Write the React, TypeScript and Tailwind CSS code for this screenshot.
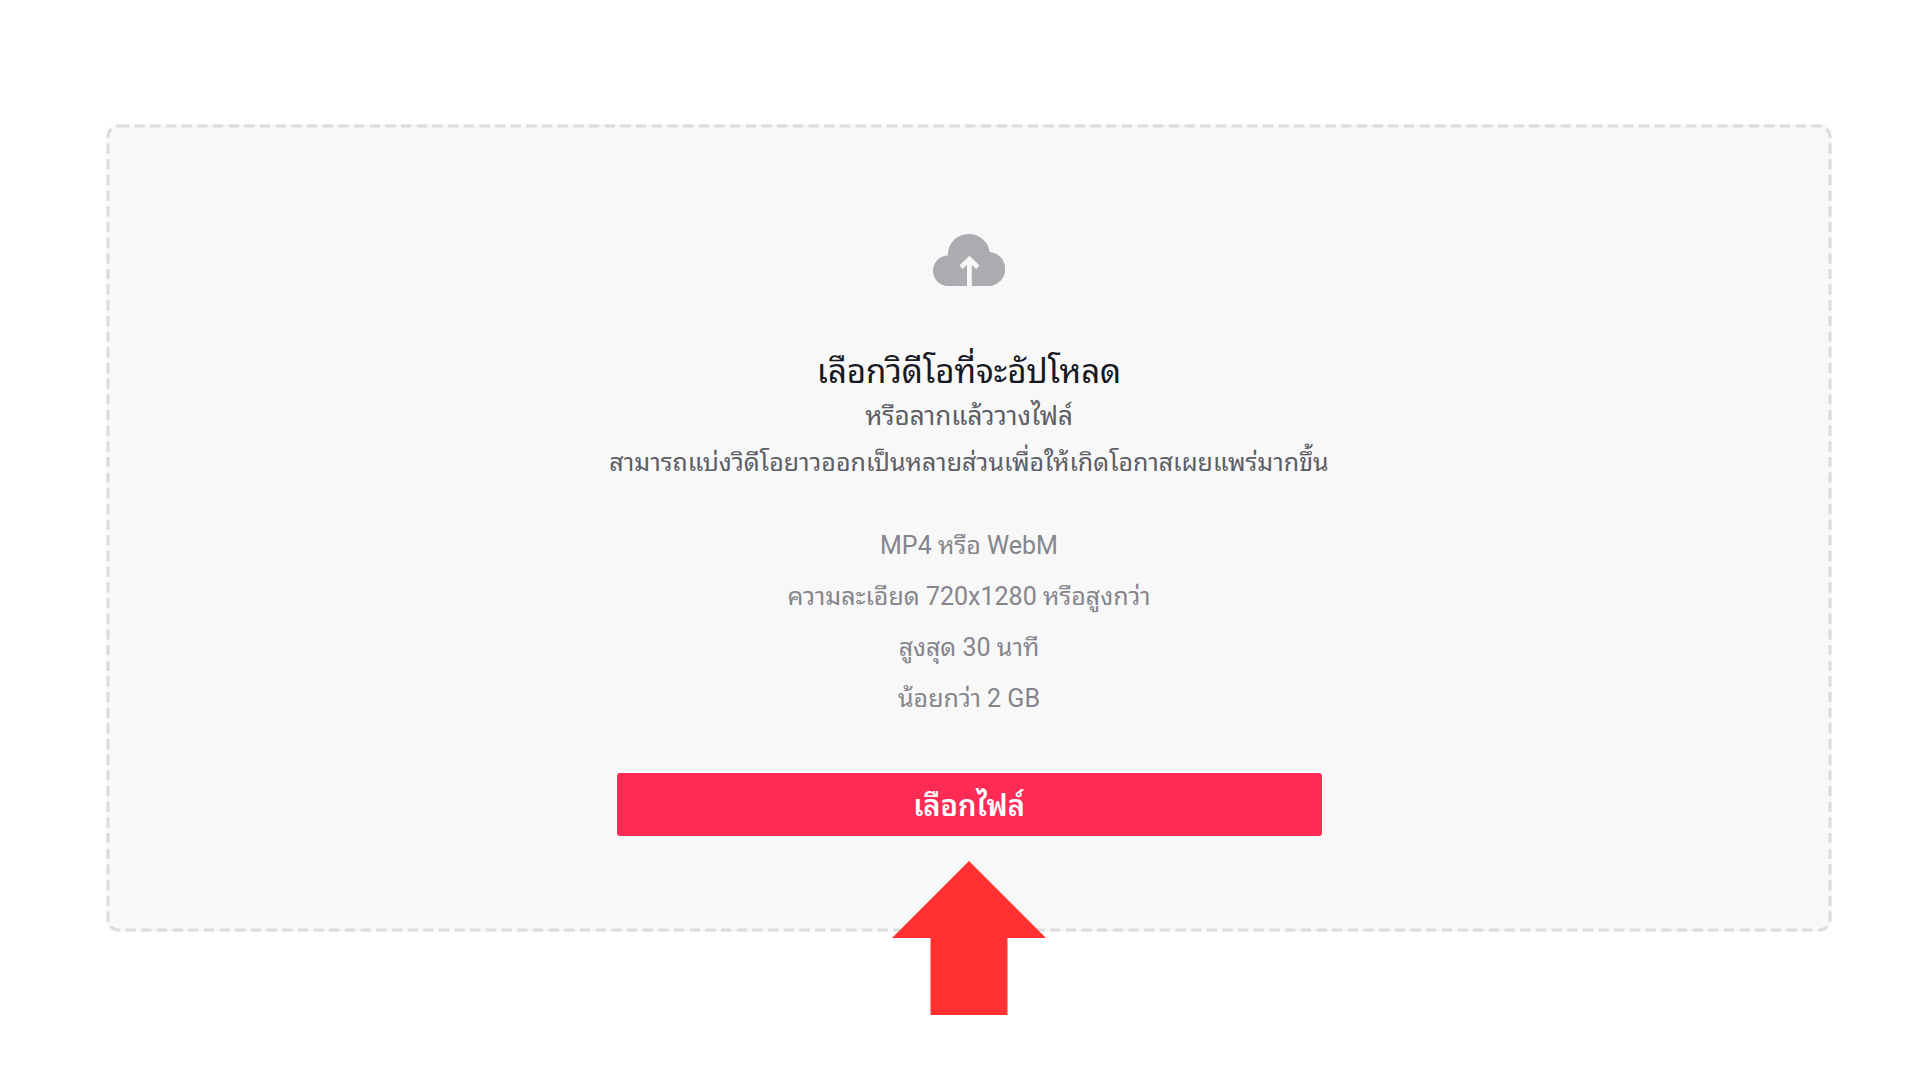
import React from 'react';

const requirements = [
  'MP4 หรือ WebM',
  'ความละเอียด 720x1280 หรือสูงกว่า',
  'สูงสุด 30 นาที',
  'น้อยกว่า 2 GB',
];

const DashedOutline: React.FC = () => (
  <svg className="pointer-events-none absolute inset-0 h-full w-full" aria-hidden="true">
    <rect
      x="2"
      y="2"
      rx="11"
      className="h-[calc(100%-4px)] w-[calc(100%-4px)]"
      fill="none"
      stroke="#dcdcdc"
      strokeWidth="3"
      strokeDasharray="10.2 5.47"
    />
  </svg>
);

const CloudUploadIcon: React.FC = () => (
  <svg className="h-[52px] w-[72px]" viewBox="0 0 72 52" aria-hidden="true">
    <path
      d="M15.4 52A15.2 15.2 0 0 1 14.8 21.6A21 21 0 0 1 35.9 0A21 21 0 0 1 56.6 17.9A17.1 17.1 0 0 1 54 52Z"
      fill="#abacb0"
    />
    <path d="M36.4 52V26M28 33.2L36.4 25L44.8 33.2" fill="none" stroke="#f8f8f8" strokeWidth="4.8" />
  </svg>
);

const ArrowPointer: React.FC = () => (
  <svg
    className="pointer-events-none absolute left-1/2 top-full mt-[25px] h-[154px] w-[154px] -translate-x-1/2"
    viewBox="0 0 154 154"
    aria-hidden="true"
  >
    <path d="M77 0L154 77H115.5V154H38.5V77H0Z" fill="#ff3131" />
  </svg>
);

const App: React.FC = () => {
  return (
    <main className="min-h-screen bg-white pb-36 pl-[106px] pr-[88px] pt-[124px] font-['Roboto','Leelawadee_UI','Noto_Sans_Thai_Looped','Loma','Waree','Garuda','Noto_Sans',sans-serif]">
      <section className="relative flex flex-col items-center rounded-xl bg-[#f8f8f8] px-6 pb-24 pt-[110px] text-center">
        <DashedOutline />
        <CloudUploadIcon />
        <h1 className="mt-[65px] text-[33px] leading-[42px] text-[#161823]">เลือกวิดีโอที่จะอัปโหลด</h1>
        <p className="mt-0.5 text-[26px] leading-[42px] text-[#5c5d65]">หรือลากแล้ววางไฟล์</p>
        <p className="mt-[5px] text-[25px] leading-[42px] text-[#5c5d65]">
          สามารถแบ่งวิดีโอยาวออกเป็นหลายส่วนเพื่อให้เกิดโอกาสเผยแพร่มากขึ้น
        </p>
        <ul className="mt-9 text-[25px] leading-[51px] text-[#85868c]">
          {requirements.map((item) => (
            <li key={item}>{item}</li>
          ))}
        </ul>
        <div className="relative mt-[49px] w-full max-w-[705px]">
          <button
            type="button"
            className="h-[63px] w-full rounded-[3px] bg-[#fe2c55] pt-0.5 text-[29px] font-semibold leading-[42px] text-white"
          >
            เลือกไฟล์
          </button>
          <ArrowPointer />
        </div>
      </section>
    </main>
  );
};

export default App;
